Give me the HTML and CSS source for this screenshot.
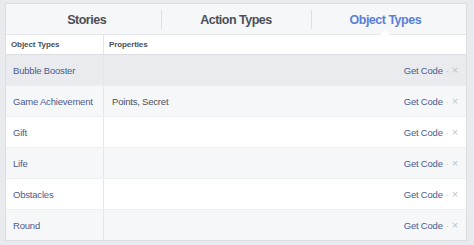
FILE: index.html
```html
<!DOCTYPE html>
<html lang="en">
<head>
    <meta charset="UTF-8">
    <title>Object Types</title>
    <link rel="stylesheet" href="styles.css">
</head>
<body>
    <div class="card">
        <div class="tabs">
            <div class="tab">Stories</div>
            <div class="tab">Action Types</div>
            <div class="tab active">Object Types</div>
        </div>
        <div class="row head">
            <div class="col-name">Object Types</div>
            <div class="col-props">Properties</div>
        </div>
        <div class="row hover">
            <div class="col-name"><a>Bubble Booster</a></div>
            <div class="col-props"></div>
            <div class="actions"><a>Get Code</a> · <span class="x">×</span></div>
        </div>
        <div class="row alt">
            <div class="col-name"><a>Game Achievement</a></div>
            <div class="col-props">Points, Secret</div>
            <div class="actions"><a>Get Code</a> · <span class="x">×</span></div>
        </div>
        <div class="row">
            <div class="col-name"><a>Gift</a></div>
            <div class="col-props"></div>
            <div class="actions"><a>Get Code</a> · <span class="x">×</span></div>
        </div>
        <div class="row alt">
            <div class="col-name"><a>Life</a></div>
            <div class="col-props"></div>
            <div class="actions"><a>Get Code</a> · <span class="x">×</span></div>
        </div>
        <div class="row">
            <div class="col-name"><a>Obstacles</a></div>
            <div class="col-props"></div>
            <div class="actions"><a>Get Code</a> · <span class="x">×</span></div>
        </div>
        <div class="row alt">
            <div class="col-name"><a>Round</a></div>
            <div class="col-props"></div>
            <div class="actions"><a>Get Code</a> · <span class="x">×</span></div>
        </div>
    </div>
</body>
</html>
```

FILE: styles.css
```css
body {
    margin: 0;
    padding: 3px 7px 3px 5px;
    background: #e9eaed;
    font-family: 'Liberation Sans', Arial, sans-serif;
}

.card {
    background: #fff;
    border: 1px solid #dddfe2;
}

.tabs {
    display: flex;
    height: 30px;
    padding: 0 6px;
    background: #f6f7f9;
    border-bottom: 1px solid #e5e6e9;
}

.tab {
    flex: 1;
    position: relative;
    display: flex;
    align-items: center;
    justify-content: center;
    padding-top: 1px;
    font-size: 12.5px;
    letter-spacing: -0.5px;
    font-weight: bold;
    color: #4b4f56;
}

.tab + .tab::before {
    content: '';
    position: absolute;
    left: 0;
    top: 6px;
    bottom: 5px;
    border-left: 1px solid #dddfe2;
}

.tab.active {
    color: #5b7fdc;
}

.tab.active::after {
    content: '';
    position: absolute;
    left: 50%;
    bottom: -1px;
    margin-left: -5px;
    border: 5px solid transparent;
    border-bottom: 5px solid #fff;
    border-top: 0;
}

.row {
    display: flex;
    align-items: stretch;
    height: 30px;
    font-size: 9.5px;
    letter-spacing: -0.2px;
    color: #4b4f56;
    border-bottom: 1px solid #eceef1;
}

.row.head {
    height: 19px;
    font-weight: bold;
    font-size: 8px;
    letter-spacing: -0.1px;
    color: #4b4f56;
    border-bottom: 1px solid #dddfe2;
}

.row.head .col-name {
    padding-left: 5px;
    width: 92px;
}

.row.head .col-props {
    padding-left: 5px;
}

.row.hover {
    background: #e9ebee;
}

.row.alt {
    background: #f6f7f9;
}

.row:last-child {
    border-bottom: 0;
}

.col-name {
    width: 90px;
    padding-left: 7px;
    display: flex;
    align-items: center;
    border-right: 1px solid #e5e6e9;
}

.col-props {
    flex: 1;
    padding-left: 8px;
    display: flex;
    align-items: center;
}

.actions {
    display: flex;
    align-items: center;
    gap: 3px;
    padding-right: 8px;
    color: #bec3c9;
}

a {
    color: #4b5b8f;
}

.x {
    font-size: 11px;
    color: #bec3c9;
}
```
